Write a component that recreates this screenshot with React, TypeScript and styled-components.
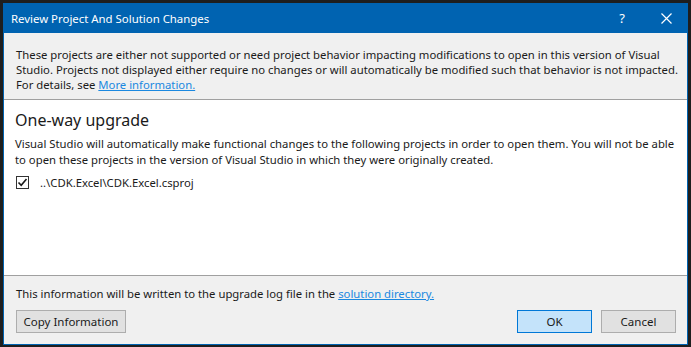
import { FC } from 'react';
import styled, { createGlobalStyle } from 'styled-components';

const GlobalStyle = createGlobalStyle`
    html, body {
        margin: 0;
        padding: 0;
        background: #1e1e1e;
    }
    * {
        box-sizing: border-box;
    }
`;

const Page = styled.div`
    width: 691px;
    height: 347px;
    padding: 3px 3px 2px 3px;
    font-family: 'Noto Sans', 'Open Sans', sans-serif;
    font-size: 11.3px;
    color: #1a1a1a;
`;

const Dialog = styled.div`
    width: 685px;
    height: 342px;
    display: flex;
    flex-direction: column;
    border: 1px solid #0063b1;
    border-top: 0;
    background: #ffffff;
`;

// ----------------------------------------------------------------------------

const TitleBar = styled.div`
    height: 30px;
    background: #0063b1;
    color: #ffffff;
    display: flex;
    align-items: center;
    padding-left: 8px;
    margin: 0 -1px;
`;

const Title = styled.div`
    flex: 1;
    font-size: 11.4px;
`;

const TitleButton = styled.div`
    width: 44px;
    height: 30px;
    display: flex;
    align-items: center;
    justify-content: center;
    font-size: 13px;
`;

// ----------------------------------------------------------------------------

const InfoPanel = styled.div`
    height: 67px;
    background: #f0f0f0;
    border-bottom: 1px solid #a0a0a0;
    padding: 14px 12px 0 12px;
    line-height: 15px;
    white-space: nowrap;
`;

const Link = styled.a`
    color: #1a88e0;
    text-decoration: underline;
    cursor: pointer;
`;

// ----------------------------------------------------------------------------

const Content = styled.div`
    flex: 1;
    padding: 8px 11px 0 11px;
`;

const Heading = styled.h2`
    margin: 0 0 4px 0;
    font-size: 16px;
    font-weight: 400;
    line-height: 24px;
`;

const Description = styled.p`
    margin: 0 0 6px 0;
    line-height: 16px;
    white-space: nowrap;
`;

const ProjectRow = styled.label`
    display: flex;
    align-items: center;
    gap: 11px;
    height: 16px;
    padding-left: 1px;
`;

const CheckBox = styled.span`
    width: 13px;
    height: 13px;
    border: 1px solid #333333;
    background: #ffffff;
    display: flex;
    align-items: center;
    justify-content: center;
`;

// ----------------------------------------------------------------------------

const Footer = styled.div`
    height: 69px;
    background: #f0f0f0;
    border-top: 1px solid #a0a0a0;
    padding: 10px 11px 0 12px;
    display: flex;
    flex-direction: column;
`;

const FooterText = styled.div`
    line-height: 16px;
`;

const ButtonRow = styled.div`
    display: flex;
    align-items: center;
    margin-top: 8px;
    gap: 9px;
`;

const Button = styled.button<{ $primary?: boolean; $width: number }>`
    width: ${({ $width }) => $width}px;
    height: 23px;
    font-family: inherit;
    font-size: 11.5px;
    color: #1a1a1a;
    padding: 0;
    background: ${({ $primary }) => ($primary ? '#c4e3fa' : '#e1e1e1')};
    border: 1px solid ${({ $primary }) => ($primary ? '#0078d7' : '#adadad')};
    border-radius: 0;
`;

const Spacer = styled.div`
    flex: 1;
`;

export const ReviewDialog: FC = () => (
    <Page>
        <Dialog>
            <TitleBar>
                <Title>Review Project And Solution Changes</Title>
                <TitleButton>?</TitleButton>
                <TitleButton>
                    <svg width="11" height="11" viewBox="0 0 11 11">
                        <path d="M0.5 0.5 L10.5 10.5 M10.5 0.5 L0.5 10.5" stroke="#ffffff" strokeWidth="1.2" />
                    </svg>
                </TitleButton>
            </TitleBar>
            <InfoPanel>
                These projects are either not supported or need project behavior impacting modifications to open in this
                version of Visual
                <br />
                Studio. Projects not displayed either require no changes or will automatically be modified such that
                behavior is not impacted.
                <br />
                For details, see <Link>More information.</Link>
            </InfoPanel>
            <Content>
                <Heading>One-way upgrade</Heading>
                <Description>
                    Visual Studio will automatically make functional changes to the following projects in order to open them.
                    You will not be able
                    <br />
                    to open these projects in the version of Visual Studio in which they were originally created.
                </Description>
                <ProjectRow>
                    <CheckBox>
                        <svg width="11" height="11" viewBox="0 0 11 11">
                            <path d="M1.5 5.5 L4.2 8.3 L9.5 2" fill="none" stroke="#1a1a1a" strokeWidth="1.6" />
                        </svg>
                    </CheckBox>
                    ..\CDK.Excel\CDK.Excel.csproj
                </ProjectRow>
            </Content>
            <Footer>
                <FooterText>
                    This information will be written to the upgrade log file in the <Link>solution directory.</Link>
                </FooterText>
                <ButtonRow>
                    <Button $width={110}>Copy Information</Button>
                    <Spacer />
                    <Button $primary $width={75}>OK</Button>
                    <Button $width={75}>Cancel</Button>
                </ButtonRow>
            </Footer>
        </Dialog>
    </Page>
);

export default function App() {
    return (
        <>
            <GlobalStyle />
            <ReviewDialog />
        </>
    );
}
